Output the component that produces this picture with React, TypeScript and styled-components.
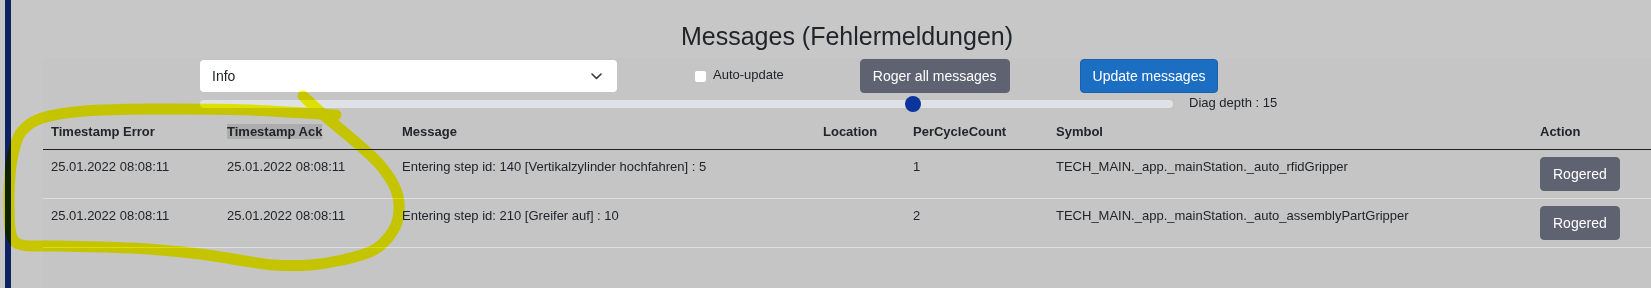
import React from 'react';
import styled, { createGlobalStyle } from 'styled-components';

const GlobalStyle = createGlobalStyle`
  html, body {
    margin: 0;
    padding: 0;
    background: #c7c7c7;
  }
  body {
    font-family: "Liberation Sans", Arial, sans-serif;
    color: #212529;
  }
`;

const Page = styled.div`
  position: relative;
  display: flex;
  width: 1651px;
  height: 288px;
  overflow: hidden;
  background: #c7c7c7;
`;

const SideEdge = styled.div`
  flex: 0 0 6px;
  margin-left: 5px;
  background: #0e2163;
`;

const Main = styled.main`
  flex: 1;
  display: flex;
  flex-direction: column;
  padding-left: 32px;
`;

const Title = styled.h2`
  margin: 0;
  padding-top: 21px;
  height: 58px;
  box-sizing: border-box;
  font-size: 25px;
  font-weight: 400;
  line-height: 30px;
  text-align: center;
  color: #212529;
`;

const Panel = styled.section`
  flex: 1;
  padding-top: 1px;
  background: #c5c5c5;
`;

const Controls = styled.div`
  display: flex;
  align-items: center;
  height: 34px;
  padding-left: 157px;
`;

const SelectBox = styled.div`
  display: flex;
  align-items: center;
  justify-content: space-between;
  width: 417px;
  height: 32px;
  box-sizing: border-box;
  padding: 0 15px 0 12px;
  background: #fff;
  border-radius: 4px;
  font-size: 14px;
`;

const AutoUpdate = styled.label`
  display: flex;
  align-items: center;
  gap: 7px;
  margin-left: 78px;
  font-size: 13px;

  span {
    margin-bottom: 3px;
  }
`;

const CheckBox = styled.input`
  appearance: none;
  width: 11px;
  height: 11px;
  margin: 0;
  background: #fff;
  border-radius: 2px;
`;

const Button = styled.button<{ $variant: 'secondary' | 'primary'; $offset?: number }>`
  height: 34px;
  margin-left: ${({ $offset }) => $offset ?? 0}px;
  padding: 0 12px;
  box-sizing: border-box;
  border: 1px solid ${({ $variant }) => ($variant === 'primary' ? '#1861ac' : '#5f6271')};
  border-radius: 4px;
  background: ${({ $variant }) => ($variant === 'primary' ? '#1b6ec2' : '#5f6271')};
  color: #fff;
  font-family: "Liberation Sans", Arial, sans-serif;
  font-size: 14px;
  line-height: 20px;
  white-space: nowrap;
`;

const SliderRow = styled.div`
  display: flex;
  align-items: center;
  height: 21px;
  padding-left: 157px;
`;

const Range = styled.input`
  appearance: none;
  width: 973px;
  height: 16px;
  margin: 0;
  background: transparent;

  &::-webkit-slider-runnable-track {
    height: 8px;
    background: #dee2e6;
    border-radius: 4px;
  }

  &::-webkit-slider-thumb {
    appearance: none;
    width: 16px;
    height: 16px;
    margin-top: -4px;
    border: none;
    border-radius: 50%;
    background: #0b349c;
  }
`;

const DiagLabel = styled.span`
  margin-left: 16px;
  margin-bottom: 2px;
  font-size: 13px;
  line-height: 15px;
`;

const Table = styled.table`
  width: 1608px;
  table-layout: fixed;
  border-collapse: collapse;
  font-size: 13px;
`;

const HeadCell = styled.th<{ $w: number }>`
  width: ${({ $w }) => $w}px;
  padding: 8px;
  box-sizing: border-box;
  text-align: left;
  vertical-align: bottom;
  font-weight: 700;
  line-height: 19px;
  border-bottom: 1px solid #1f1f1f;
  white-space: nowrap;
`;

const Marked = styled.span`
  background: #adadad;
`;

const Cell = styled.td`
  padding: 7px 8px;
  vertical-align: top;
  line-height: 20px;
  border-bottom: 1px solid #dedede;
  white-space: nowrap;
`;

const Overlay = styled.svg`
  position: absolute;
  left: 0;
  top: 0;
  width: 1651px;
  height: 288px;
  pointer-events: none;
  mix-blend-mode: multiply;
`;

const columns = [
  { label: 'Timestamp Error', w: 176 },
  { label: 'Timestamp Ack', w: 175, marked: true },
  { label: 'Message', w: 421 },
  { label: 'Location', w: 90 },
  { label: 'PerCycleCount', w: 143 },
  { label: 'Symbol', w: 484 },
  { label: 'Action', w: 119 },
];

const rows = [
  {
    error: '25.01.2022 08:08:11',
    ack: '25.01.2022 08:08:11',
    message: 'Entering step id: 140 [Vertikalzylinder hochfahren] : 5',
    location: '',
    count: '1',
    symbol: 'TECH_MAIN._app._mainStation._auto_rfidGripper',
  },
  {
    error: '25.01.2022 08:08:11',
    ack: '25.01.2022 08:08:11',
    message: 'Entering step id: 210 [Greifer auf] : 10',
    location: '',
    count: '2',
    symbol: 'TECH_MAIN._app._mainStation._auto_assemblyPartGripper',
  },
];

// freehand marker loop, as points of the stroke centre
const loop: [number, number][] = [
  [303, 96], [326, 117], [358, 144], [381, 166], [396, 190], [399, 211],
  [393, 231], [374, 250], [342, 260], [310, 265], [274, 265], [245, 261],
  [200, 254], [132, 248], [60, 246], [22, 245], [11, 234], [9, 205],
  [10, 175], [14, 150], [22, 131], [42, 118], [85, 111], [150, 109],
  [250, 110], [336, 115],
];

const smoothPath = (pts: [number, number][]) => {
  let d = `M ${pts[0][0]} ${pts[0][1]}`;
  for (let i = 0; i < pts.length - 1; i++) {
    const p0 = pts[i - 1] ?? pts[i];
    const p1 = pts[i];
    const p2 = pts[i + 1];
    const p3 = pts[i + 2] ?? p2;
    const c1 = [p1[0] + (p2[0] - p0[0]) / 6, p1[1] + (p2[1] - p0[1]) / 6];
    const c2 = [p2[0] - (p3[0] - p1[0]) / 6, p2[1] - (p3[1] - p1[1]) / 6];
    d += ` C ${c1[0]} ${c1[1]} ${c2[0]} ${c2[1]} ${p2[0]} ${p2[1]}`;
  }
  return d;
};

const Chevron = () => (
  <svg width="11" height="7" viewBox="0 0 11 7">
    <path d="M1 1l4.5 4.5L10 1" fill="none" stroke="#343a40" strokeWidth="1.6" strokeLinecap="round" strokeLinejoin="round" />
  </svg>
);

export default function App() {
  return (
    <>
      <GlobalStyle />
      <Page>
        <SideEdge />
        <Main>
          <Title>Messages (Fehlermeldungen)</Title>
          <Panel>
            <Controls>
              <SelectBox>
                <span>Info</span>
                <Chevron />
              </SelectBox>
              <AutoUpdate>
                <CheckBox type="checkbox" />
                <span>Auto-update</span>
              </AutoUpdate>
              <Button $variant="secondary" $offset={76}>Roger all messages</Button>
              <Button $variant="primary" $offset={70}>Update messages</Button>
            </Controls>
            <SliderRow>
              <Range type="range" min={1} max={20} defaultValue={15} />
              <DiagLabel>Diag depth : 15</DiagLabel>
            </SliderRow>
            <Table>
              <thead>
                <tr>
                  {columns.map((c) => (
                    <HeadCell key={c.label} $w={c.w}>
                      {c.marked ? <Marked>{c.label}</Marked> : c.label}
                    </HeadCell>
                  ))}
                </tr>
              </thead>
              <tbody>
                {rows.map((r, i) => (
                  <tr key={i}>
                    <Cell>{r.error}</Cell>
                    <Cell>{r.ack}</Cell>
                    <Cell>{r.message}</Cell>
                    <Cell>{r.location}</Cell>
                    <Cell>{r.count}</Cell>
                    <Cell>{r.symbol}</Cell>
                    <Cell>
                      <Button $variant="secondary">Rogered</Button>
                    </Cell>
                  </tr>
                ))}
              </tbody>
            </Table>
          </Panel>
        </Main>
        <Overlay viewBox="0 0 1651 288">
          <path d={smoothPath(loop)} fill="none" stroke="#fffe00" strokeWidth="11" strokeLinecap="round" strokeLinejoin="round" />
        </Overlay>
      </Page>
    </>
  );
}
